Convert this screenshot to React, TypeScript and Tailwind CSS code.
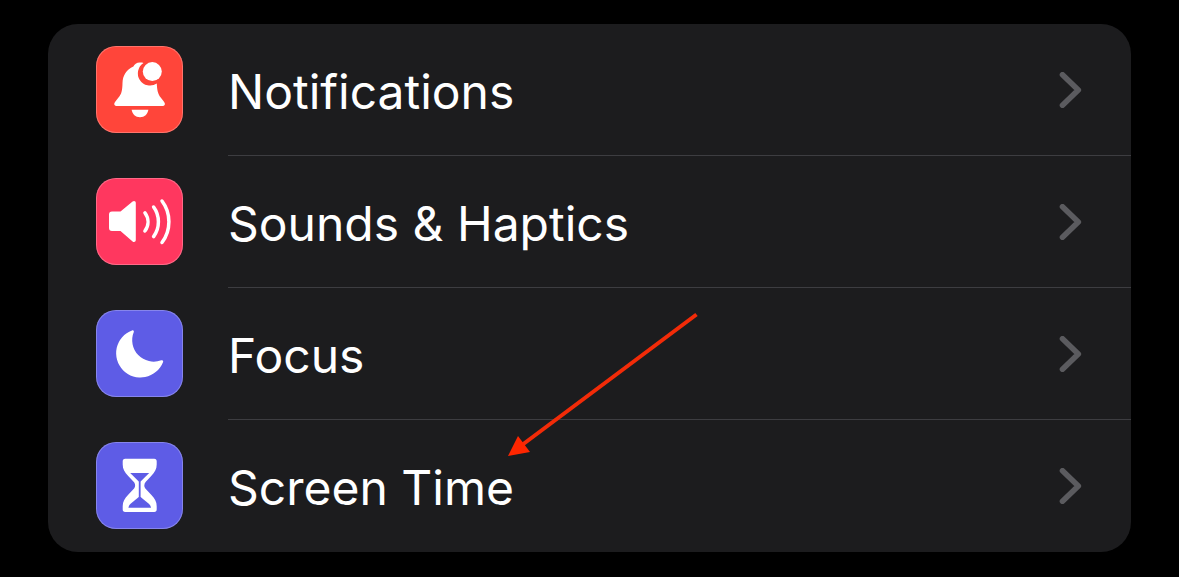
import React from 'react';

function BellIcon() {
  return (
    <svg className="size-full" viewBox="0 0 87 87" fill="white" aria-hidden="true">
      <path d="M47.5 16.9C46.3 16.6 44.8 16.5 43.7 16.6C40.6 16.7 38.4 18.4 37.4 20.6C30.6 23.5 26.7 29.4 26.5 37C26.3 44.5 25.6 48 22.5 51.6L19.4 55.4C17.3 58 18.3 60 21.3 60H66C69 60 69.8 58 67.8 55.4L64.7 51.6C61.9 48 61.1 44.3 60.8 37.6A12.2 12.2 0 0 1 47.5 16.9Z" />
      <circle cx="56.3" cy="25.6" r="9.5" />
      <path d="M35.6 63.7H52.4C51.6 68.2 48.6 71.2 44 71.2C39.4 71.2 36.4 68.2 35.6 63.7Z" />
    </svg>
  );
}

function SpeakerIcon() {
  return (
    <svg className="size-full" viewBox="0 0 87 87" fill="none" aria-hidden="true">
      <path d="M16 33.6H24.5L36.6 23.6C38 22.5 39.8 23.2 39.8 25V62C39.8 63.8 38 64.5 36.6 63.4L24.5 53H16C14 53 13 52 13 50V36.6C13 34.6 14 33.6 16 33.6Z" fill="white" />
      <g stroke="white" strokeWidth="3.5" strokeLinecap="round">
        <path d="M48.9 34.8C53 40.4 53 47.4 48.9 53" />
        <path d="M57.6 29C64 37.6 64 50 57.6 58.6" />
        <path d="M66 23C75.2 35 75.2 52.5 66 64.5" />
      </g>
    </svg>
  );
}

function MoonIcon() {
  return (
    <svg className="size-full" viewBox="0 0 87 87" fill="white" aria-hidden="true">
      <path d="M36 20.4C37.2 19.8 38.2 20.6 37.8 22A21.5 21.5 0 0 0 65.2 50.3C66.8 49.8 67.6 50.8 67 52.2A24.3 24.3 0 1 1 36 20.4Z" />
    </svg>
  );
}

function HourglassIcon() {
  return (
    <svg className="size-full" viewBox="0 0 87 87" aria-hidden="true">
      <path
        d="M29.2 16.7H58.2C59.9 16.7 60.7 17.6 60.7 19.2V22.5C60.7 27 58.8 30.3 55.2 34L49.8 39.8C47.8 42 47.8 44.8 49.8 47L55.2 52.8C58.8 56.5 60.7 59.8 60.7 64.3V67.6C60.7 69.2 59.9 70 58.2 70H29.2C27.5 70 26.7 69.2 26.7 67.6V64.3C26.7 59.8 28.6 56.5 32.2 52.8L37.6 47C39.6 44.8 39.6 42 37.6 39.8L32.2 34C28.6 30.3 26.7 27 26.7 22.5V19.2C26.7 17.6 27.5 16.7 29.2 16.7Z"
        fill="white"
      />
      <g fill="#5e5ce6">
        <path d="M34.2 31H53.2L44.6 39.6H42.8Z" />
        <path d="M42.8 55H44.6L52.5 61.4C54 62.8 54.8 64 55 65.8H32.4C32.6 64 33.4 62.8 34.9 61.4Z" />
        <path d="M42.8 38H44.6V57H42.8Z" />
      </g>
    </svg>
  );
}

function Chevron() {
  return (
    <svg className="h-9 w-6 flex-shrink-0" viewBox="0 0 24 36" fill="none" aria-hidden="true">
      <path d="M4.5 2.8L20.3 18L4.5 33.2" stroke="#5b5b5f" strokeWidth="5.6" strokeLinecap="round" strokeLinejoin="round" />
    </svg>
  );
}

const rows = [
  { id: 'notifications', label: 'Notifications', color: 'bg-[#ff453a]', icon: <BellIcon /> },
  { id: 'sounds', label: 'Sounds & Haptics', color: 'bg-[#ff375f]', icon: <SpeakerIcon /> },
  { id: 'focus', label: 'Focus', color: 'bg-[#5e5ce6]', icon: <MoonIcon /> },
  { id: 'screen-time', label: 'Screen Time', color: 'bg-[#5e5ce6]', icon: <HourglassIcon /> },
];

function App() {
  return (
    <main className="min-h-screen bg-black px-12 py-6 font-['Inter',sans-serif]">
      <nav aria-label="Settings" className="relative overflow-hidden rounded-[30px] bg-[#1c1c1e]">
        <ul>
          {rows.map((row, index) => (
            <li key={row.id}>
              <a href={`#${row.id}`} className="flex h-33 items-stretch pl-12">
                <span className="flex items-center pr-[45px] pb-0.5">
                  <span className={`size-[87px] overflow-hidden rounded-[20px] ${row.color} inset-ring inset-ring-white/25`}>
                    {row.icon}
                  </span>
                </span>
                <span
                  className={`flex flex-1 items-center justify-between pr-[49px] ${index < rows.length - 1 ? 'border-b border-[#3d3d41]' : ''}`}
                >
                  <span className="pt-1 text-5xl leading-none text-white">{row.label}</span>
                  <Chevron />
                </span>
              </a>
            </li>
          ))}
        </ul>

        {/* Arrow pointing at Screen Time */}
        <svg
          className="pointer-events-none absolute top-72 left-[460px] h-36 w-48"
          viewBox="0 0 192 144"
          fill="none"
          aria-hidden="true"
        >
          <path d="M188.5 2.5L14 133" stroke="#f22b08" strokeWidth="4" />
          <path d="M0 144L10 124L22 140Z" fill="#ff2600" />
        </svg>
      </nav>
    </main>
  );
}

export default App;
